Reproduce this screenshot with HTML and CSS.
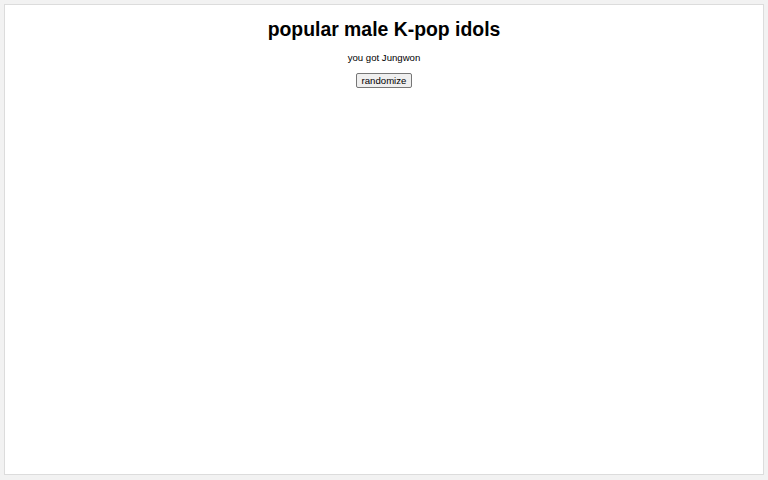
FILE: index.html
```html
<!DOCTYPE html>
<html>
<head>
<meta charset="utf-8">
<link rel="stylesheet" href="styles.css">
</head>
<body>
<div class="frame">
  <h1 class="title">popular male K-pop idols</h1>
  <p class="result">you got Jungwon</p>
  <button class="btn">randomize</button>
</div>
</body>
</html>
```
FILE: styles.css
```css
html, body {
  margin: 0;
  padding: 0;
  background: #f2f2f2;
}
body {
  padding: 4px;
  font-family: "Liberation Sans", Arial, sans-serif;
}
.frame {
  box-sizing: border-box;
  height: 471px;
  background: #ffffff;
  border: 1px solid #dcdcdc;
  display: flex;
  flex-direction: column;
  align-items: center;
}
.title {
  margin: 13px 0 0;
  font-size: 19.4px;
  line-height: 22px;
  font-weight: bold;
  color: #000;
}
.result {
  margin: 12px 0 0;
  font-size: 9.6px;
  line-height: 12px;
  color: #000;
}
.btn {
  margin-top: 9px;
  font-family: "Liberation Sans", Arial, sans-serif;
  font-size: 9.6px;
  line-height: 11px;
  padding: 1px 4.5px;
  background: #efefef;
  border: 1px solid #767676;
  border-radius: 2px;
  color: #000;
}
```
